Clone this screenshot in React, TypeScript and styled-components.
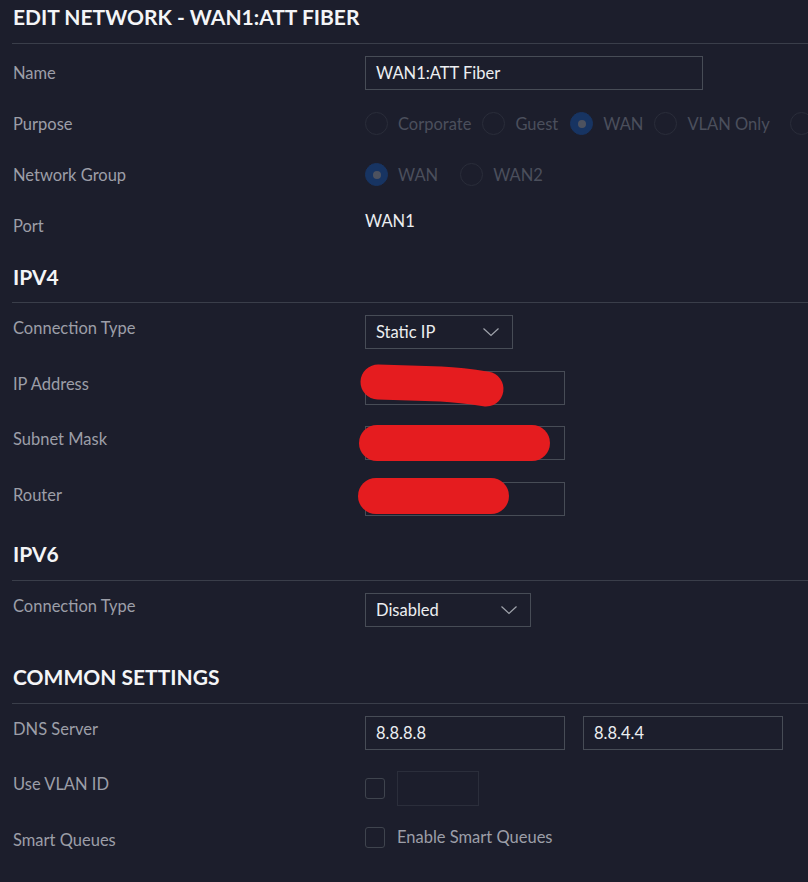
import styled, { createGlobalStyle } from 'styled-components';

const GlobalStyle = createGlobalStyle`
  html, body {
    margin: 0;
    padding: 0;
    background: #1c1e2c;
  }

  body {
    font-family: Lato, 'Open Sans', sans-serif;
    -webkit-font-smoothing: antialiased;
  }
`;

const Page = styled.div`
  min-height: 882px;
  padding-left: 12px;
  background: #1c1e2c;
  overflow: hidden;
`;

const Heading = styled.h2<{ $top: number; $bottom: number }>`
  margin: 0;
  padding: ${(p) => p.$top}px 0 ${(p) => p.$bottom}px 1px;
  font-size: 21px;
  font-weight: 700;
  line-height: 24px;
  color: #f4f5f7;
  text-transform: uppercase;
  border-bottom: 1px solid #3a3e4a;
`;

const Rows = styled.div<{ $top: number }>`
  display: flex;
  flex-direction: column;
  padding-top: ${(p) => p.$top}px;
`;

const Row = styled.div<{ $height: number; $center?: boolean }>`
  display: grid;
  grid-template-columns: 353px 1fr;
  align-items: ${(p) => (p.$center ? 'center' : 'start')};
  height: ${(p) => p.$height}px;
`;

const Label = styled.div<{ $center?: boolean }>`
  padding-top: ${(p) => (p.$center ? 0 : 4)}px;
  padding-left: 1px;
  font-size: 16.5px;
  line-height: 18px;
  color: #9c9ea8;
`;

const Control = styled.div`
  display: flex;
  align-items: center;
`;

const Field = styled.div<{ $width: number; $faint?: boolean; $height?: number }>`
  position: relative;
  box-sizing: border-box;
  width: ${(p) => p.$width}px;
  height: ${(p) => p.$height ?? 34}px;
  padding: 0 10px;
  display: flex;
  align-items: center;
  border: 1px solid ${(p) => (p.$faint ? '#2b2e3b' : '#474c56')};
  font-size: 16.5px;
  color: #eceef1;
`;

const Gap = styled.div<{ $gap: number }>`
  display: flex;
  align-items: center;
  gap: ${(p) => p.$gap}px;
`;

const SelectBox = styled(Field)`
  justify-content: space-between;
  padding-right: 12px;
`;

const Scribble = styled.svg`
  position: absolute;
  left: 0;
  top: 0;
  overflow: visible;
  pointer-events: none;
`;

const RadioGroup = styled.div<{ $spacing: number }>`
  display: flex;
  align-items: center;
  gap: ${(p) => p.$spacing}px;
  white-space: nowrap;
`;

const RadioItem = styled.div<{ $push?: number }>`
  display: flex;
  align-items: center;
  gap: 10px;
  margin-left: ${(p) => p.$push ?? 0}px;
  font-size: 16.5px;
  color: #4b4f5c;
`;

const RadioCircle = styled.span<{ $checked?: boolean }>`
  box-sizing: border-box;
  flex: none;
  width: 23px;
  height: 23px;
  border-radius: 50%;
  border: 1px solid ${(p) => (p.$checked ? '#173462' : '#2a2d3a')};
  background: ${(p) => (p.$checked ? '#173462' : 'transparent')};
  display: flex;
  align-items: center;
  justify-content: center;

  &::after {
    content: '';
    display: ${(p) => (p.$checked ? 'block' : 'none')};
    width: 8px;
    height: 8px;
    border-radius: 50%;
    background: #4d525f;
  }
`;

const PortValue = styled.div`
  padding-bottom: 10px;
  font-size: 16.5px;
  color: #eceef1;
`;

const Checkbox = styled.span`
  box-sizing: border-box;
  width: 20px;
  height: 21px;
  border-radius: 3px;
  border: 1px solid #3f444e;
`;

const CheckText = styled.span`
  font-size: 16.5px;
  color: #9c9ea8;
`;

const Chevron = () => (
  <svg width="18" height="10" viewBox="0 0 18 10">
    <path d="M1.5 1.5 L9 8.5 L16.5 1.5" fill="none" stroke="#a0a4ac" strokeWidth="1.2" />
  </svg>
);

type Mark = { d: string; width: number };

const RedMark = ({ d, width }: Mark) => (
  <Scribble width="1" height="1">
    <path d={d} fill="none" stroke="#e51c1f" strokeWidth={width} strokeLinecap="round" strokeLinejoin="round" />
  </Scribble>
);

const Radio = ({ label, checked, push }: { label?: string; checked?: boolean; push?: number }) => (
  <RadioItem $push={push}>
    <RadioCircle $checked={checked} />
    {label}
  </RadioItem>
);

export default function App() {
  return (
    <Page>
      <GlobalStyle />

      <Heading $top={5} $bottom={14}>
        Edit Network - WAN1:ATT Fiber
      </Heading>
      <Rows $top={3}>
        <Row $height={51} $center>
          <Label $center>Name</Label>
          <Control>
            <Field $width={338}>WAN1:ATT Fiber</Field>
          </Control>
        </Row>
        <Row $height={51} $center>
          <Label $center>Purpose</Label>
          <RadioGroup $spacing={11}>
            <Radio label="Corporate" />
            <Radio label="Guest" />
            <Radio label="WAN" checked push={1} />
            <Radio label="VLAN Only" />
            <Radio push={9} />
          </RadioGroup>
        </Row>
        <Row $height={51} $center>
          <Label $center>Network Group</Label>
          <RadioGroup $spacing={22}>
            <Radio label="WAN" checked />
            <Radio label="WAN2" />
          </RadioGroup>
        </Row>
        <Row $height={51} $center>
          <Label $center>Port</Label>
          <PortValue>WAN1</PortValue>
        </Row>
      </Rows>

      <Heading $top={14} $bottom={13}>
        IPV4
      </Heading>
      <Rows $top={12}>
        <Row $height={55.5}>
          <Label>Connection Type</Label>
          <Control>
            <SelectBox $width={148}>
              Static IP
              <Chevron />
            </SelectBox>
          </Control>
        </Row>
        <Row $height={55.5}>
          <Label>IP Address</Label>
          <Control>
            <Field $width={200}>
              <RedMark d="M12 10 L75 12 Q95 13 120 17" width={35} />
            </Field>
          </Control>
        </Row>
        <Row $height={55.5}>
          <Label>Subnet Mask</Label>
          <Control>
            <Field $width={200}>
              <RedMark d="M11 16 L166 16" width={36} />
            </Field>
          </Control>
        </Row>
        <Row $height={55.5}>
          <Label>Router</Label>
          <Control>
            <Field $width={200}>
              <RedMark d="M10 13 L125 13" width={36} />
            </Field>
          </Control>
        </Row>
      </Rows>

      <Heading $top={5} $bottom={14}>
        IPV6
      </Heading>
      <Rows $top={12}>
        <Row $height={55.5}>
          <Label>Connection Type</Label>
          <Control>
            <SelectBox $width={166}>
              Disabled
              <Chevron />
            </SelectBox>
          </Control>
        </Row>
      </Rows>

      <Heading $top={16} $bottom={14}>
        Common Settings
      </Heading>
      <Rows $top={12}>
        <Row $height={55}>
          <Label>DNS Server</Label>
          <Gap $gap={18}>
            <Field $width={200}>8.8.8.8</Field>
            <Field $width={200}>8.8.4.4</Field>
          </Gap>
        </Row>
        <Row $height={56}>
          <Label>Use VLAN ID</Label>
          <Gap $gap={12}>
            <Checkbox />
            <Field $width={82} $height={35} $faint />
          </Gap>
        </Row>
        <Row $height={56}>
          <Label>Smart Queues</Label>
          <Gap $gap={12}>
            <Checkbox />
            <CheckText>Enable Smart Queues</CheckText>
          </Gap>
        </Row>
      </Rows>
    </Page>
  );
}
